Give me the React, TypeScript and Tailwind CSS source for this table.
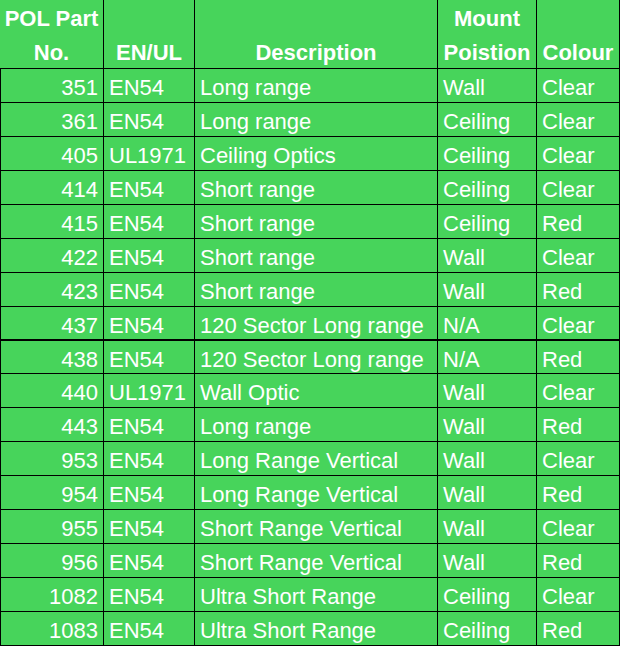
const rows: [string, string, string, string, string][] = [
  ['351', 'EN54', 'Long range', 'Wall', 'Clear'],
  ['361', 'EN54', 'Long range', 'Ceiling', 'Clear'],
  ['405', 'UL1971', 'Ceiling Optics', 'Ceiling', 'Clear'],
  ['414', 'EN54', 'Short range', 'Ceiling', 'Clear'],
  ['415', 'EN54', 'Short range', 'Ceiling', 'Red'],
  ['422', 'EN54', 'Short range', 'Wall', 'Clear'],
  ['423', 'EN54', 'Short range', 'Wall', 'Red'],
  ['437', 'EN54', '120 Sector Long range', 'N/A', 'Clear'],
  ['438', 'EN54', '120 Sector Long range', 'N/A', 'Red'],
  ['440', 'UL1971', 'Wall Optic', 'Wall', 'Clear'],
  ['443', 'EN54', 'Long range', 'Wall', 'Red'],
  ['953', 'EN54', 'Long Range Vertical', 'Wall', 'Clear'],
  ['954', 'EN54', 'Long Range Vertical', 'Wall', 'Red'],
  ['955', 'EN54', 'Short Range Vertical', 'Wall', 'Clear'],
  ['956', 'EN54', 'Short Range Vertical', 'Wall', 'Red'],
  ['1082', 'EN54', 'Ultra Short Range', 'Ceiling', 'Clear'],
  ['1083', 'EN54', 'Ultra Short Range', 'Ceiling', 'Red'],
];

const widths = ['w-[104px]', 'w-[91px]', 'w-[243px]', 'w-[99px]', 'w-[83px]'];

export default function App() {
  return (
    <div
      className="w-[621px] h-[647px] bg-white text-white text-[22px]"
      style={{ fontFamily: '"Liberation Sans", Arial, sans-serif' }}
    >
      <div className="w-[620px] bg-[#47d45b]">
        {/* header */}
        <div className="flex h-[69px] border-b border-black font-bold leading-[34px]">
          <div className={`${widths[0]} shrink-0 border-r border-black text-center pt-[2px]`}>
            POL Part
            <br />
            No.
          </div>
          <div className={`${widths[1]} shrink-0 border-r border-black text-center pt-[36px]`}>
            EN/UL
          </div>
          <div className={`${widths[2]} shrink-0 border-r border-black text-center pt-[36px]`}>
            Description
          </div>
          <div className={`${widths[3]} shrink-0 border-r border-black text-center pt-[2px]`}>
            Mount
            <br />
            Poistion
          </div>
          <div className={`${widths[4]} shrink-0 border-r border-black text-center pt-[36px]`}>
            Colour
          </div>
        </div>

        {rows.map((r, i) => (
          <div
            key={r[0]}
            className={`flex border-l border-black leading-[33px] ${
              i === 7 ? 'h-[34px] border-b-2' : i === 8 ? 'h-[33px] border-b' : 'h-[34px] border-b'
            }`}
          >
            <div className="w-[103px] shrink-0 border-r border-black text-right pr-[5px] pt-[2px]">
              {r[0]}
            </div>
            {r.slice(1).map((c, j) => (
              <div
                key={j}
                className={`${widths[j + 1]} shrink-0 border-r border-black pl-[5px] pt-[2px] whitespace-nowrap`}
              >
                {c}
              </div>
            ))}
          </div>
        ))}
      </div>
    </div>
  );
}
